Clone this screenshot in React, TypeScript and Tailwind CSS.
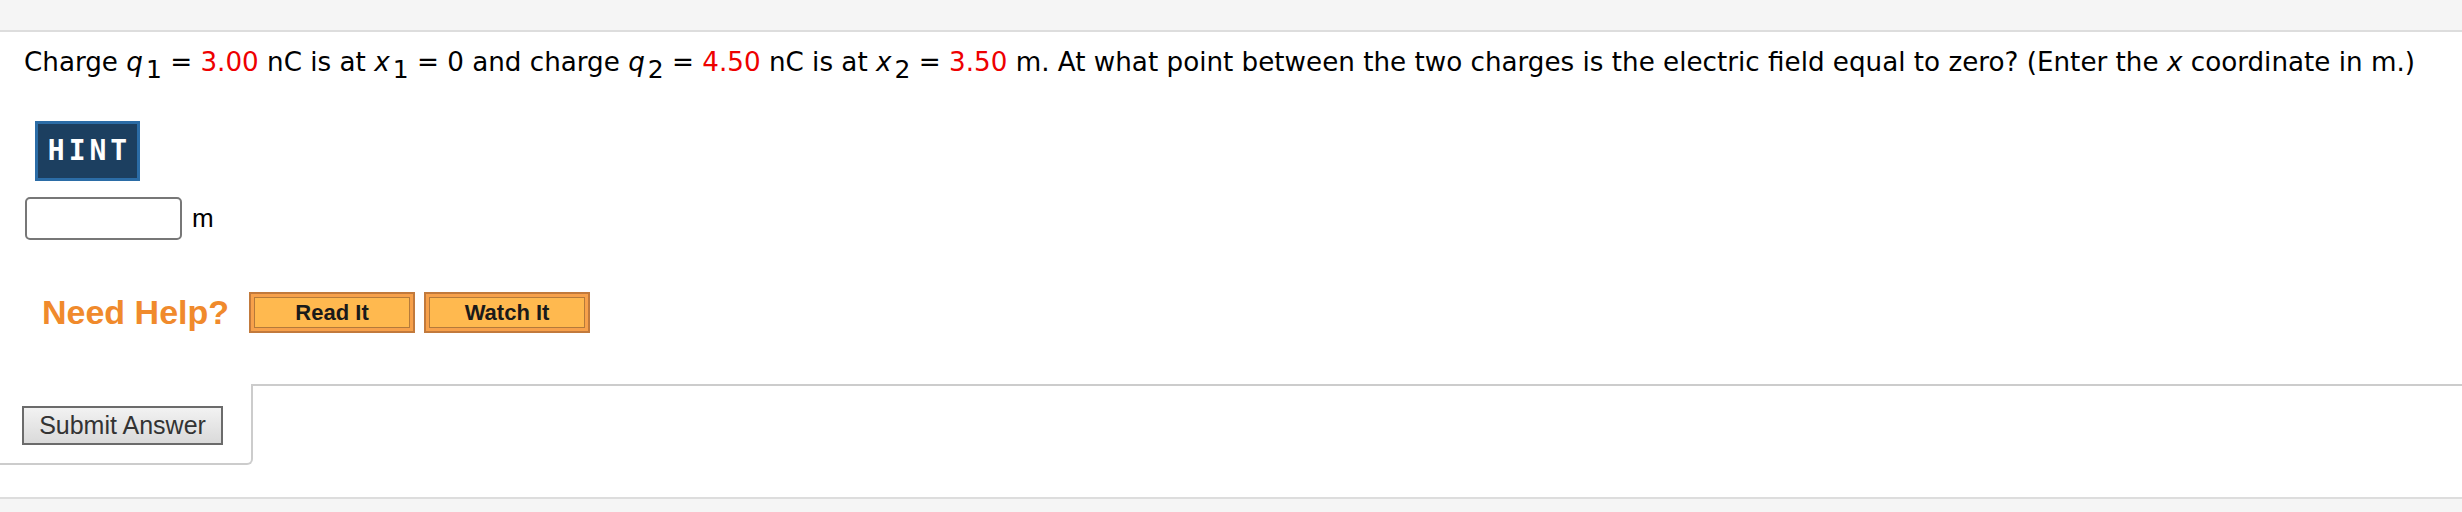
import React from 'react';

const sans = "font-['DejaVu_Sans',Verdana,sans-serif]";
const arial = "font-['Liberation_Sans',Arial,sans-serif]";

function Red({ children }: { children: React.ReactNode }) {
    return <span className="text-[#ee0000]">{children}</span>;
}

function Sym({ v, sub }: { v: string; sub: string }) {
    return (
        <span>
            <i>{v}</i>
            <sub className="text-[25px] relative top-[7px] ml-[3px]">{sub}</sub>
        </span>
    );
}

function HelpButton({ label }: { label: string }) {
    return (
        <button className="w-[166px] h-[41px] bg-[#f7a14b] border-2 border-[#c27a3c] p-[3px] flex">
            <span className={`flex-1 flex items-center justify-center bg-[#ffb94f] border border-[#b57a3a] text-[22px] font-bold text-[#1a1a1a] ${arial}`}>
                {label}
            </span>
        </button>
    );
}

export default function App() {
    return (
        <div className="w-[2462px] h-[512px] bg-white flex flex-col text-black">
            <div className="h-[32px] bg-[#f5f5f5] border-b-2 border-[#dddddd] shrink-0" />

            <div className={`pl-[24px] pt-[12px] text-[26.2px] leading-[36px] whitespace-nowrap ${sans}`}>
                Charge <Sym v="q" sub="1" /> = <Red>3.00</Red> nC is at <Sym v="x" sub="1" /> = 0 and charge{' '}
                <Sym v="q" sub="2" /> = <Red>4.50</Red> nC is at <Sym v="x" sub="2" /> = <Red>3.50</Red> m. At what point
                between the two charges is the electric field equal to zero? (Enter the <i>x</i> coordinate in m.)
            </div>

            <div className="pl-[35px] mt-[41px]">
                <div className="w-[105px] h-[60px] bg-[#1c3f60] border-[3px] border-[#2b6ca6] flex items-center justify-center">
                    <span className="font-['DejaVu_Sans_Mono',monospace] font-bold text-[28px] tracking-[4px] text-white pl-[4px]">HINT</span>
                </div>
            </div>

            <div className="pl-[25px] mt-[16px] flex items-center gap-[10px]">
                <input type="text" className="w-[157px] h-[43px] border-2 border-[#777777] rounded-[5px] bg-white" />
                <span className={`text-[26px] ${arial}`}>m</span>
            </div>

            <div className="mt-[47px] pl-[42px] flex items-center">
                <span className={`text-[34px] font-bold text-[#f08a2c] mr-[20px] ${arial}`}>Need Help?</span>
                <div className="flex gap-[9px]">
                    <HelpButton label="Read It" />
                    <HelpButton label="Watch It" />
                </div>
            </div>

            <div className="mt-[46px] flex">
                <div className="w-[253px] h-[81px] border-r-2 border-b-2 border-[#cccccc] rounded-br-[6px] flex items-center pl-[22px] pt-[3px]">
                    <button className={`w-[201px] h-[39px] border-2 border-[#6b6b6b] bg-gradient-to-b from-[#f2f2f2] to-[#dadada] text-[25px] text-[#333333] leading-none ${arial}`}>
                        Submit Answer
                    </button>
                </div>
                <div className="flex-1 border-t-2 border-[#cccccc]" />
            </div>

            <div className="mt-[32px] flex-1 bg-[#f5f5f5] border-t-2 border-[#dddddd]" />
        </div>
    );
}
